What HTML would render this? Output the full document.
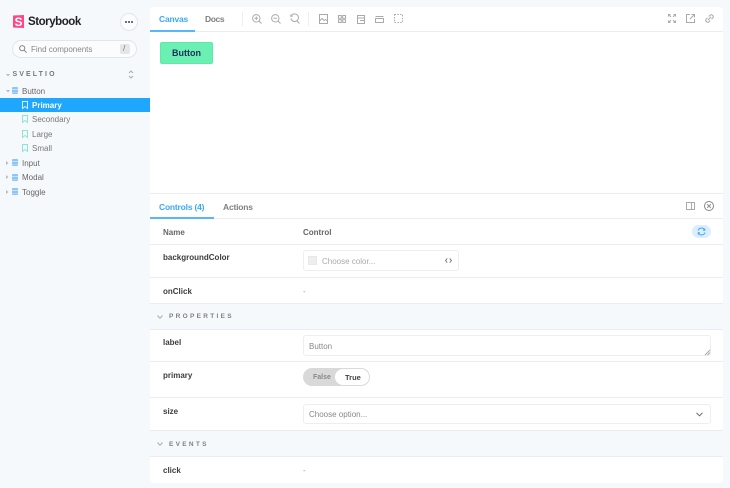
<!DOCTYPE html>
<html><head><meta charset="utf-8"><style>
html,body{margin:0;padding:0;width:730px;height:488px;overflow:hidden;background:#f6f9fc;font-family:"Liberation Sans",sans-serif;color:#333}
.a{position:absolute;white-space:nowrap;line-height:12px}
.b{position:absolute}
svg{position:absolute;overflow:visible}
.n{font-size:8px;font-weight:bold;color:#3c3c3c;margin-top:1px}
.side{font-size:8px;color:#666;margin-top:1px}
.tab{font-size:8.5px;font-weight:bold;letter-spacing:-.2px}
.sec{font-size:6.5px;font-weight:bold;color:#808080;letter-spacing:2.3px;margin-top:1px}
.line{position:absolute;left:150px;width:573px;height:1px;background:#e9edf0}
.ic{fill:none;stroke:#aaa;stroke-width:1}
.inp{position:absolute;background:#fff;border:1px solid #eceef0;border-radius:3px;box-sizing:border-box}
.cmp{position:absolute;left:12px;width:6px;height:7px;border-radius:1px;background-image:linear-gradient(#8cc5fb 2px,#c9e3fd 2px,#c9e3fd 3px,#8cc5fb 3px,#8cc5fb 5px,#c9e3fd 5px,#8cc5fb 6px)}
</style></head><body>

<div class="b" style="left:150px;top:7px;width:573px;height:476px;background:#fff;border-radius:4px"></div>

<!-- Sidebar -->
<svg style="left:13px;top:15px" width="11" height="13" viewBox="0 0 11 13"><path d="M0 .5 L11 0 V13 L0 12.5Z" fill="#ff4785"/><text x="5.5" y="11" font-size="12" font-weight="bold" fill="#fff" text-anchor="middle" font-family="Liberation Sans">S</text></svg>
<div class="a" style="left:28px;top:15px;font-size:11.5px;font-weight:bold;line-height:14px;color:#222;letter-spacing:-.45px">Storybook</div>
<div class="b" style="left:120px;top:13px;width:16px;height:16px;border:1px solid #e3e6e9;border-radius:50%;background:#fbfcfd"></div>
<div class="b" style="left:125px;top:20.5px;width:2px;height:2px;background:#444;border-radius:50%;box-shadow:3px 0 #444,6px 0 #444"></div>
<div class="b" style="left:12px;top:40px;width:125px;height:18px;box-sizing:border-box;border:1px solid #e3e6e9;border-radius:9px;background:#fbfcfd"></div>
<svg style="left:19px;top:45px" width="8" height="8" viewBox="0 0 8 8"><circle cx="3.2" cy="3.2" r="2.6" fill="none" stroke="#888"/><path d="M5.2 5.2L7.6 7.6" stroke="#888"/></svg>
<div class="a side" style="left:31px;top:43px;color:#888">Find components</div>
<div class="b" style="left:120px;top:44px;width:10px;height:10px;background:#e4e6e8;border-radius:2px"></div>
<div class="a" style="left:123px;top:43px;font-size:8px;color:#777">/</div>

<div class="a" style="left:12.5px;top:69px;font-size:7px;font-weight:bold;color:#777;letter-spacing:2.1px">SVELTIO</div>
<svg style="left:128px;top:70px" width="6" height="9" viewBox="0 0 6 9"><path d="M1 3L3 1L5 3M1 6L3 8L5 6" class="ic"/></svg>
<svg style="left:5.5px;top:74px" width="4" height="2.5"><path d="M0 0H4L2 2.5Z" fill="#bbb"/></svg>

<svg style="left:5.5px;top:90px" width="4" height="2.5"><path d="M0 0H4L2 2.5Z" fill="#bbb"/></svg>
<div class="cmp" style="top:87px"></div>
<div class="a side" style="left:22px;top:85px">Button</div>

<div class="b" style="left:0;top:98px;width:150px;height:14px;background:#1ea7fd"></div>
<svg style="left:22px;top:101px" width="6" height="8" viewBox="0 0 6 8"><path d="M.5.5H5.5V7.5L3 5.5L.5 7.5Z" fill="none" stroke="#d5effe"/></svg>
<div class="a" style="left:32px;top:100px;font-size:8px;font-weight:bold;color:#fff">Primary</div>

<svg style="left:22px;top:115px" width="6" height="8" viewBox="0 0 6 8"><path d="M.5.5H5.5V7.5L3 5.5L.5 7.5Z" fill="none" stroke="#8de4d5"/></svg>
<div class="a side" style="left:32px;top:113px;color:#777">Secondary</div>
<svg style="left:22px;top:130px" width="6" height="8" viewBox="0 0 6 8"><path d="M.5.5H5.5V7.5L3 5.5L.5 7.5Z" fill="none" stroke="#8de4d5"/></svg>
<div class="a side" style="left:32px;top:128px;color:#777">Large</div>
<svg style="left:22px;top:144px" width="6" height="8" viewBox="0 0 6 8"><path d="M.5.5H5.5V7.5L3 5.5L.5 7.5Z" fill="none" stroke="#8de4d5"/></svg>
<div class="a side" style="left:32px;top:142px;color:#777">Small</div>

<svg style="left:6px;top:160.5px" width="2.5" height="4"><path d="M0 0V4L2.5 2Z" fill="#bbb"/></svg>
<div class="cmp" style="top:159px"></div>
<div class="a side" style="left:22px;top:157px">Input</div>
<svg style="left:6px;top:175px" width="2.5" height="4"><path d="M0 0V4L2.5 2Z" fill="#bbb"/></svg>
<div class="cmp" style="top:174px"></div>
<div class="a side" style="left:22px;top:171px">Modal</div>
<svg style="left:6px;top:189.5px" width="2.5" height="4"><path d="M0 0V4L2.5 2Z" fill="#bbb"/></svg>
<div class="cmp" style="top:188px"></div>
<div class="a side" style="left:22px;top:186px">Toggle</div>

<!-- Toolbar -->
<div class="line" style="top:31px"></div>
<div class="b" style="left:150px;top:30px;width:45px;height:2px;background:#55b8fb"></div>
<div class="a tab" style="left:159px;top:13px;color:#3aa9f5">Canvas</div>
<div class="a tab" style="left:205px;top:13px;color:#808080;letter-spacing:-.4px">Docs</div>
<div class="b" style="left:242px;top:12px;width:1px;height:14px;background:#eceef0"></div>
<div class="b" style="left:308px;top:12px;width:1px;height:14px;background:#eceef0"></div>

<svg style="left:252px;top:14px" width="10" height="10" viewBox="0 0 10 10" class="ic"><circle cx="4.3" cy="4.3" r="3.7"/><path d="M7 7L9.5 9.5M2.5 4.3H6M4.3 2.5V6"/></svg>
<svg style="left:271px;top:14px" width="10" height="10" viewBox="0 0 10 10" class="ic"><circle cx="4.3" cy="4.3" r="3.7"/><path d="M7 7L9.5 9.5M2.5 4.3H6"/></svg>
<svg style="left:290px;top:14px" width="10" height="10" viewBox="0 0 10 10" class="ic"><path d="M1.5 1.5A3.8 3.8 0 1 1 .9 4.5M7 7L9.5 9.5M.8 .5V2.3H2.6"/></svg>

<svg style="left:319px;top:14px" width="9" height="10" viewBox="0 0 9 10" class="ic"><rect x=".5" y=".5" width="8" height="9"/><path d="M.5 7L3 4.5L5 6.5L6.5 5.5L8.5 7"/></svg>
<svg style="left:338px;top:15px" width="8" height="8" viewBox="0 0 8 8" class="ic"><rect x=".5" y=".5" width="2.8" height="2.8"/><rect x="4.7" y=".5" width="2.8" height="2.8"/><rect x=".5" y="4.7" width="2.8" height="2.8"/><rect x="4.7" y="4.7" width="2.8" height="2.8"/></svg>
<svg style="left:357px;top:15px" width="8" height="9" viewBox="0 0 8 9" class="ic"><rect x=".5" y=".5" width="7" height="8"/><path d="M.5 3H7.5M3 5.5H7.5"/></svg>
<svg style="left:375px;top:16px" width="9" height="7" viewBox="0 0 9 7" class="ic"><path d="M.5 .5H8.5M.5 2.5H8.5V6.5H.5Z"/></svg>
<svg style="left:394px;top:14px" width="9" height="9" viewBox="0 0 9 9" class="ic"><rect x=".5" y=".5" width="8" height="8" stroke-dasharray="1.5 1.3"/></svg>

<svg style="left:668px;top:14px" width="8" height="9" viewBox="0 0 8 9" class="ic"><path d="M.5 2.5V.5H2.5M5.5 .5H7.5V2.5M.5 6.5V8.5H2.5M5.5 8.5H7.5V6.5M.5 .5L3 3M7.5 .5L5 3M.5 8.5L3 6M7.5 8.5L5 6"/></svg>
<svg style="left:686px;top:14px" width="9" height="9" viewBox="0 0 9 9" class="ic"><path d="M4 .5H.5V8.5H8.5V5M5.5 .5H8.5V3.5M8.5 .5L4 5"/></svg>
<svg style="left:705px;top:14px" width="9" height="9" viewBox="0 0 9 9" class="ic"><path d="M3.8 2.5L5.3 1A2 2 0 0 1 8 3.7L6.5 5.2M5.2 6.5L3.7 8A2 2 0 0 1 1 5.3L2.5 3.8M3 6L6 3"/></svg>

<!-- Canvas button -->
<div class="b" style="left:160px;top:42px;width:53px;height:22px;box-sizing:border-box;background:#6bf0b3;border:1px solid #5fe8aa;border-radius:2px"></div>
<div class="a" style="left:160px;top:47px;width:53px;text-align:center;font-size:9px;font-weight:bold;color:#1f2f5c">Button</div>

<!-- Panel -->
<div class="line" style="top:193px"></div>
<div class="line" style="top:218px"></div>
<div class="b" style="left:150px;top:217px;width:64px;height:2px;background:#55b8fb"></div>
<div class="a tab" style="left:159px;top:201px;color:#3aa9f5">Controls (4)</div>
<div class="a tab" style="left:223px;top:201px;color:#808080">Actions</div>
<svg style="left:686px;top:202px" width="9" height="8" viewBox="0 0 9 8" class="ic"><rect x=".5" y=".5" width="8" height="7"/><path d="M5.5 .5V7.5"/></svg>
<svg style="left:704px;top:201px" width="10" height="10" viewBox="0 0 10 10" class="ic"><circle cx="5" cy="5" r="4.5" stroke="#888"/><path d="M3.2 3.2L6.8 6.8M6.8 3.2L3.2 6.8" stroke="#888"/></svg>

<div class="a n" style="left:163px;top:226px;color:#666">Name</div>
<div class="a n" style="left:303px;top:226px;color:#666">Control</div>
<div class="b" style="left:692px;top:225px;width:19px;height:13px;background:#dcedfd;border-radius:7px"></div>
<svg style="left:697px;top:227px" width="9" height="9" viewBox="0 0 9 9" fill="none" stroke="#3aa9f5"><path d="M1 3.5A3.6 3.6 0 0 1 7.6 3M8 5.5A3.6 3.6 0 0 1 1.4 6"/><path d="M7.8 1.5V3.3H6M1.2 7.5V5.7H3"/></svg>
<div class="line" style="top:244px;height:1px"></div>

<div class="a n" style="left:163px;top:251px">backgroundColor</div>
<div class="inp" style="left:303px;top:250px;width:156px;height:21px"></div>
<div class="b" style="left:308px;top:256px;width:9px;height:9px;background:#eee;border:1px solid #e8e8e8;box-sizing:border-box"></div>
<div class="a side" style="left:322px;top:255px;color:#aaa">Choose color...</div>
<svg style="left:445px;top:258px" width="7" height="5" viewBox="0 0 8 6" fill="none" stroke="#666"><path d="M2.5 .5L.5 3L2.5 5.5M5.5 .5L7.5 3L5.5 5.5"/></svg>
<div class="line" style="top:277px"></div>

<div class="a n" style="left:163px;top:285px">onClick</div>
<div class="a side" style="left:303px;top:285px;color:#999">-</div>
<div class="line" style="top:303px"></div>

<div class="b" style="left:150px;top:304px;width:573px;height:25px;background:#f6f9fc"></div>
<svg style="left:157px;top:315px" width="6" height="4" viewBox="0 0 6 4" fill="none" stroke="#aaa"><path d="M.5 .5L3 3.3L5.5 .5"/></svg>
<div class="a sec" style="left:169px;top:310px">PROPERTIES</div>
<div class="line" style="top:329px"></div>

<div class="a n" style="left:163px;top:336px">label</div>
<div class="inp" style="left:303px;top:335px;width:408px;height:21px"></div>
<div class="a side" style="left:309px;top:340px;color:#888">Button</div>
<svg style="left:705px;top:350px" width="5" height="5" stroke="#aaa"><path d="M0 5L5 0M2.5 5L5 2.5"/></svg>
<div class="line" style="top:361px"></div>

<div class="a n" style="left:163px;top:369px">primary</div>
<div class="b" style="left:303px;top:368px;width:67px;height:18px;background:#d9d9d9;border-radius:9px"></div>
<div class="b" style="left:335px;top:369px;width:34px;height:16px;background:#fff;border-radius:8px"></div>
<div class="a" style="left:313px;top:372px;font-size:7px;font-weight:bold;color:#888">False</div>
<div class="a" style="left:345px;top:372px;font-size:7.5px;font-weight:bold;color:#444">True</div>
<div class="line" style="top:397px"></div>

<div class="a n" style="left:163px;top:405px">size</div>
<div class="inp" style="left:303px;top:404px;width:408px;height:20px"></div>
<div class="a side" style="left:309px;top:408px;color:#888">Choose option...</div>
<svg style="left:696px;top:412px" width="7" height="5" viewBox="0 0 7 5" fill="none" stroke="#666"><path d="M.5 .8L3.5 3.8L6.5 .8"/></svg>
<div class="line" style="top:430px"></div>

<div class="b" style="left:150px;top:431px;width:573px;height:25px;background:#f6f9fc"></div>
<svg style="left:157px;top:442px" width="6" height="4" viewBox="0 0 6 4" fill="none" stroke="#aaa"><path d="M.5 .5L3 3.3L5.5 .5"/></svg>
<div class="a sec" style="left:169px;top:438px">EVENTS</div>
<div class="line" style="top:456px"></div>

<div class="a n" style="left:163px;top:464px">click</div>
<div class="a side" style="left:303px;top:464px;color:#999">-</div>
</body></html>
